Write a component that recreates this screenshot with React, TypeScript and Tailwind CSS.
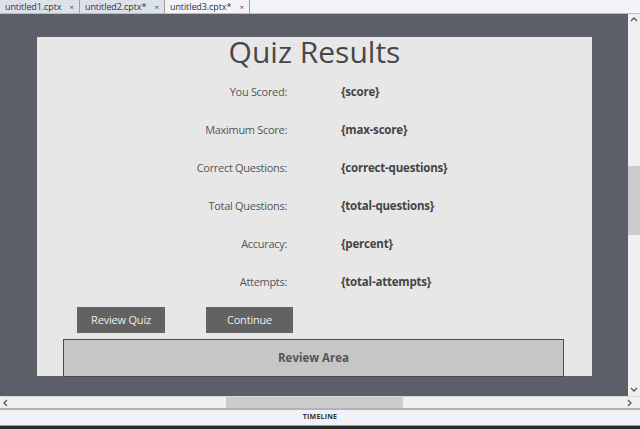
import React from "react";

const tabs = [
  { name: "untitled1.cptx", w: "w-[80px]", active: false },
  { name: "untitled2.cptx*", w: "w-[85px]", active: false },
  { name: "untitled3.cptx*", w: "w-[85px]", active: true },
];

const results = [
  ["You Scored:", "{score}"],
  ["Maximum Score:", "{max-score}"],
  ["Correct Questions:", "{correct-questions}"],
  ["Total Questions:", "{total-questions}"],
  ["Accuracy:", "{percent}"],
  ["Attempts:", "{total-attempts}"],
];

function Chevron({ dir }: { dir: "up" | "down" | "left" | "right" }) {
  const d = {
    up: "M1 5 L4 2 L7 5",
    down: "M1 2 L4 5 L7 2",
    left: "M5 1 L2 4 L5 7",
    right: "M2 1 L5 4 L2 7",
  }[dir];
  return (
    <svg width="8" height="8" viewBox="0 0 8 8">
      <path d={d} fill="none" stroke="#555" strokeWidth="1.3" />
    </svg>
  );
}

export default function App() {
  return (
    <div className="w-[640px] h-[429px] flex flex-col overflow-hidden bg-[#5c5f67] font-['Open_Sans',sans-serif]">
      {/* document tabs */}
      <div className="h-[14px] flex bg-[#f3f4f8] border-b border-[#b9bcc4]">
        {tabs.map((t) => (
          <div
            key={t.name}
            className={`${t.w} flex items-center justify-between pl-[5px] pr-[5px] border-r border-[#9a9ea8] ${
              t.active ? "bg-[#f3f4f8]" : "bg-[#dde2ea]"
            }`}
          >
            <span className="text-[9px] leading-none text-[#333] tracking-[-0.1px]">{t.name}</span>
            <span className="text-[8px] leading-none text-[#444]">×</span>
          </div>
        ))}
        <div className="flex-1" />
      </div>

      {/* stage */}
      <div className="flex-1 flex min-h-0">
        <div className="flex-1 pl-[37px] pt-[23px]">
          <div className="w-[555px] h-[339px] bg-[#e7e7e7] flex flex-col items-start">
            <h1 className="self-stretch text-center text-[30px] leading-[30px] text-[#474747] mb-[6px]">
              Quiz Results
            </h1>
            <div className="grid grid-cols-[250px_1fr] gap-x-[54px] self-stretch">
              {results.map(([label, value]) => (
                <React.Fragment key={label}>
                  <div className="h-[38px] flex items-center justify-end text-[11px] text-[#555] tracking-[-0.3px]">
                    {label}
                  </div>
                  <div className="h-[38px] flex items-center text-[11.5px] font-bold text-[#444] tracking-[-0.2px]">
                    {value}
                  </div>
                </React.Fragment>
              ))}
            </div>
            <div className="flex gap-[41px] ml-[40px] mt-[6px]">
              <button className="w-[88px] h-[26px] bg-[#626262] text-[11px] tracking-[-0.2px] text-[#eee]">Review Quiz</button>
              <button className="w-[87px] h-[26px] bg-[#626262] text-[11px] tracking-[-0.2px] text-[#eee]">Continue</button>
            </div>
            <div className="ml-[26px] mt-[6px] w-[501px] h-[38px] shrink-0 bg-[#c6c6c6] border border-[#4a4a4a] flex items-center justify-center text-[11.5px] font-bold text-[#555]">
              Review Area
            </div>
          </div>
        </div>

        {/* vertical scrollbar */}
        <div className="w-[12px] bg-[#f0f0f0] flex flex-col items-center justify-between py-[2px]">
          <Chevron dir="up" />
          <div className="flex-1 w-full flex flex-col pt-[142px]">
            <div className="h-[69px] bg-[#cccccc]" />
          </div>
          <Chevron dir="down" />
        </div>
      </div>

      {/* horizontal scrollbar */}
      <div className="h-[12px] bg-[#f0f0f0] flex items-center border-t border-[#d8d8d8]">
        <div className="w-[12px] flex justify-center">
          <Chevron dir="left" />
        </div>
        <div className="flex-1 h-full pl-[214px] pr-[221px]">
          <div className="h-full bg-[#cccccc]" />
        </div>
        <div className="w-[12px] flex justify-center mr-[4px]">
          <Chevron dir="right" />
        </div>
      </div>

      {/* timeline panel */}
      <div className="h-[17px] bg-[#f0f2f7] border-t-2 border-[#b3b3b3] flex items-center justify-center">
        <span className="text-[7px] font-bold text-[#333] tracking-[0.2px]">TIMELINE</span>
      </div>
      <div className="h-[4px] bg-[#2c2c2c] border-t border-[#9c9c9c]" />
    </div>
  );
}
